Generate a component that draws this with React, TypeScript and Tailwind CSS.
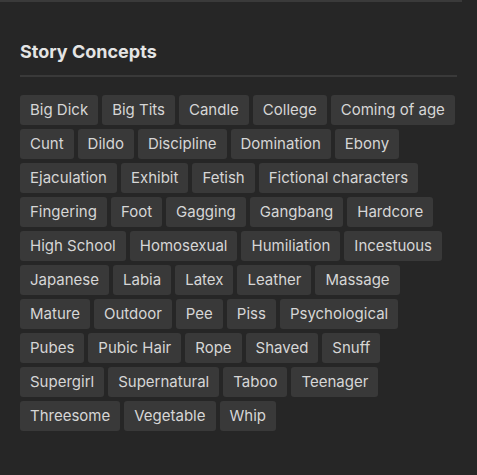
import React from "react";

const concepts = [
  "Big Dick", "Big Tits", "Candle", "College", "Coming of age",
  "Cunt", "Dildo", "Discipline", "Domination", "Ebony",
  "Ejaculation", "Exhibit", "Fetish", "Fictional characters",
  "Fingering", "Foot", "Gagging", "Gangbang", "Hardcore",
  "High School", "Homosexual", "Humiliation", "Incestuous",
  "Japanese", "Labia", "Latex", "Leather", "Massage",
  "Mature", "Outdoor", "Pee", "Piss", "Psychological",
  "Pubes", "Pubic Hair", "Rope", "Shaved", "Snuff",
  "Supergirl", "Supernatural", "Taboo", "Teenager",
  "Threesome", "Vegetable", "Whip",
];

const App: React.FC = () => {
  return (
    <div className="w-[477px] h-[475px] bg-[#262626] flex flex-col font-['Inter',sans-serif]">
      {/* top border from the section above */}
      <div className="w-[462px] h-[2px] bg-[#3a3a3a]" />

      <div className="px-5 pt-[38px]">
        <h2 className="text-[18px] font-bold text-[#e4e4e4] leading-[24px]">
          Story Concepts
        </h2>
        <div className="mt-[11px] h-[2px] bg-[#393939]" />

        <div className="mt-[18px] flex flex-wrap gap-[4px]">
          {concepts.map((c) => (
            <span
              key={c}
              className="h-[30px] px-[10px] flex items-center rounded-[3px] bg-[#393939] text-[15px] text-[#d6d6d6]"
            >
              {c}
            </span>
          ))}
        </div>
      </div>
    </div>
  );
};

export default App;
